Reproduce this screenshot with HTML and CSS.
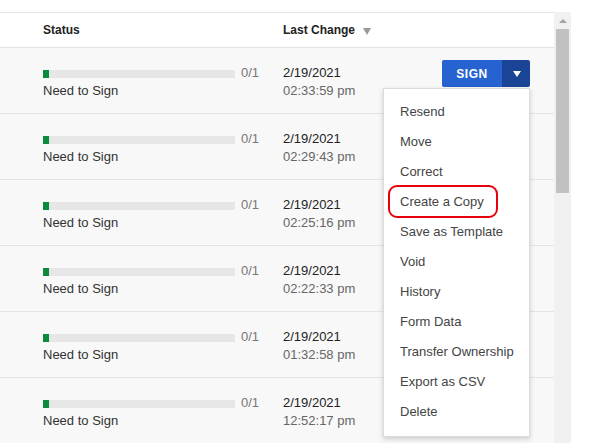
FILE: index.html
```html
<!DOCTYPE html>
<html>
<head>
<meta charset="utf-8">
<link rel="stylesheet" href="styles.css">
</head>
<body>
<div class="frame">
  <div class="table">
    <div class="head">
      <div class="col-status">Status</div>
      <div class="col-date">Last Change<span class="sort"></span></div>
    </div>

    <div class="row">
      <div class="col-status">
        <div class="progress"><div class="bar"><div class="fill"></div></div><span class="count">0/1</span></div>
        <div class="state">Need to Sign</div>
      </div>
      <div class="col-date"><div class="date">2/19/2021</div><div class="time">02:33:59 pm</div></div>
      <div class="actions">
        <div class="split">
          <button class="sign">SIGN</button>
          <button class="caret"><span class="tri"></span></button>
          <ul class="menu">
            <li>Resend</li>
            <li>Move</li>
            <li>Correct</li>
            <li><span class="hl">Create a Copy</span></li>
            <li>Save as Template</li>
            <li>Void</li>
            <li>History</li>
            <li>Form Data</li>
            <li>Transfer Ownership</li>
            <li>Export as CSV</li>
            <li>Delete</li>
          </ul>
        </div>
      </div>
    </div>

    <div class="row">
      <div class="col-status">
        <div class="progress"><div class="bar"><div class="fill"></div></div><span class="count">0/1</span></div>
        <div class="state">Need to Sign</div>
      </div>
      <div class="col-date"><div class="date">2/19/2021</div><div class="time">02:29:43 pm</div></div>
    </div>

    <div class="row">
      <div class="col-status">
        <div class="progress"><div class="bar"><div class="fill"></div></div><span class="count">0/1</span></div>
        <div class="state">Need to Sign</div>
      </div>
      <div class="col-date"><div class="date">2/19/2021</div><div class="time">02:25:16 pm</div></div>
    </div>

    <div class="row">
      <div class="col-status">
        <div class="progress"><div class="bar"><div class="fill"></div></div><span class="count">0/1</span></div>
        <div class="state">Need to Sign</div>
      </div>
      <div class="col-date"><div class="date">2/19/2021</div><div class="time">02:22:33 pm</div></div>
    </div>

    <div class="row">
      <div class="col-status">
        <div class="progress"><div class="bar"><div class="fill"></div></div><span class="count">0/1</span></div>
        <div class="state">Need to Sign</div>
      </div>
      <div class="col-date"><div class="date">2/19/2021</div><div class="time">01:32:58 pm</div></div>
    </div>

    <div class="row">
      <div class="col-status">
        <div class="progress"><div class="bar"><div class="fill"></div></div><span class="count">0/1</span></div>
        <div class="state">Need to Sign</div>
      </div>
      <div class="col-date"><div class="date">2/19/2021</div><div class="time">12:52:17 pm</div></div>
    </div>
  </div>

  <div class="scrollbar">
    <div class="up"></div>
    <div class="thumb"></div>
  </div>
</div>
</body>
</html>
```

FILE: styles.css
```css
* { box-sizing: border-box; }
html, body {
  margin: 0;
  padding: 0;
  background: #fff;
  overflow: hidden;
}
body {
  font-family: "Liberation Sans", Arial, sans-serif;
  font-size: 13px;
  color: #333;
  height: 443px;
}
.frame {
  display: flex;
  margin-top: 12px;
  height: 431px;
  width: 571px;
  overflow: hidden;
}
.table {
  width: 554px;
  border-top: 1px solid #e4e4e4;
  flex: none;
}
.head {
  display: flex;
  align-items: center;
  height: 35px;
  border-bottom: 1px solid #e4e4e4;
  background: #fff;
  font-size: 12px;
  font-weight: bold;
  color: #222;
  padding-left: 43px;
}
.col-status {
  width: 240px;
  flex: none;
}
.col-date {
  width: 120px;
  flex: none;
  display: flex;
  flex-direction: column;
}
.head .col-date {
  flex-direction: row;
  align-items: center;
}
.sort {
  display: inline-block;
  width: 0;
  height: 0;
  margin-left: 8px;
  border-left: 4.5px solid transparent;
  border-right: 4.5px solid transparent;
  border-top: 7px solid #999;
  position: relative;
  top: 1px;
}
.row {
  display: flex;
  height: 66px;
  padding-left: 43px;
  padding-top: 16px;
  background: #f8f8f8;
  border-bottom: 1px solid #e4e4e4;
  line-height: 18px;
}
.progress {
  display: flex;
  align-items: center;
  height: 18px;
}
.bar {
  width: 192px;
  height: 8px;
  background: #e6e6e6;
  position: relative;
  top: 1px;
}
.fill {
  width: 6px;
  height: 8px;
  background: #0b8a3b;
}
.count {
  margin-left: 6px;
  color: #777;
}
.state {
  color: #333;
}
.date {
  color: #222;
}
.time {
  color: #666;
}
.actions {
  margin-left: auto;
  padding-right: 24px;
  margin-top: -4px;
}
.split {
  display: flex;
  position: relative;
}
.split button {
  border: 0;
  height: 27px;
  margin: 0;
  padding: 0;
  color: #fff;
  font-family: "Liberation Sans", Arial, sans-serif;
  cursor: pointer;
}
.sign {
  width: 60px;
  background: #2663d1;
  font-size: 12px;
  font-weight: bold;
  letter-spacing: 0.6px;
  border-radius: 2px 0 0 2px;
}
.caret {
  width: 28px;
  background: #1a4496;
  border-radius: 0 2px 2px 0;
  display: flex;
  align-items: center;
  justify-content: center;
}
.tri {
  width: 0;
  height: 0;
  border-left: 4px solid transparent;
  border-right: 4px solid transparent;
  border-top: 6px solid #fff;
  margin-left: 1px;
}
.menu {
  position: absolute;
  top: 28px;
  right: 0;
  width: 147px;
  margin: 0;
  padding: 8px 0 9px;
  list-style: none;
  background: #fff;
  border: 1px solid #dcdcdc;
  box-shadow: 0 2px 5px rgba(0, 0, 0, 0.18);
  z-index: 5;
  line-height: 30px;
}
.menu li {
  height: 30px;
  padding-left: 16px;
  color: #444;
  white-space: nowrap;
}
.hl {
  position: relative;
  display: inline-block;
}
.hl::after {
  content: "";
  position: absolute;
  top: -2px;
  bottom: -1px;
  left: -12px;
  right: -14px;
  border: 2px solid #e8000c;
  border-radius: 9px;
}
.scrollbar {
  width: 17px;
  flex: none;
  background: #f1f1f1;
  position: relative;
  padding-top: 17px;
}
.up {
  position: absolute;
  top: 7px;
  left: 5px;
  width: 0;
  height: 0;
  border-left: 4px solid transparent;
  border-right: 4px solid transparent;
  border-bottom: 4px solid #a3a3a3;
}
.thumb {
  margin: 0 2px;
  height: 164px;
  background: #c1c1c1;
}
```
